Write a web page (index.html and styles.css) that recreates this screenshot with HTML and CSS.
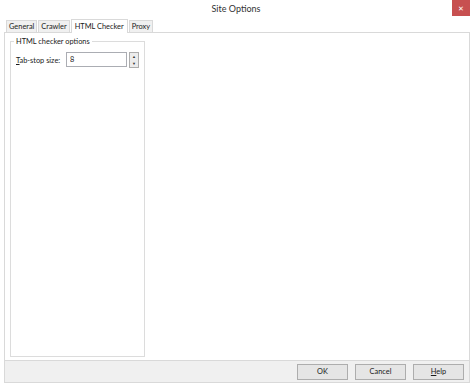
FILE: index.html
```html
<!DOCTYPE html>
<html lang="en">
<head>
    <meta charset="UTF-8">
    <title>Site Options</title>
    <link rel="stylesheet" href="styles.css">
</head>
<body>

    <div class="window">
        <div class="titlebar">
            <span></span>
            <div class="title">Site Options</div>
            <div class="close">&#x2715;</div>
        </div>

        <div class="client">
            <div class="tabs">
                <div class="tab">General</div>
                <div class="tab">Crawler</div>
                <div class="tab active">HTML Checker</div>
                <div class="tab">Proxy</div>
            </div>

            <div class="page">
                <fieldset class="group">
                    <legend>HTML checker options</legend>
                    <div class="row">
                        <label for="tabSize"><u>T</u>ab-stop size:</label>
                        <div class="spin">
                            <input type="text" id="tabSize" value="8">
                            <div class="arrows">
                                <div class="arrow">&#9650;</div>
                                <div class="arrow">&#9660;</div>
                            </div>
                        </div>
                    </div>
                </fieldset>
            </div>

            <div class="buttons">
                <button>OK</button>
                <button>Cancel</button>
                <button><u>H</u>elp</button>
            </div>
        </div>
    </div>

</body>
</html>
```

FILE: styles.css
```css
body {
    margin: 0;
    padding: 0;
    background-color: #fff;
    font-family: Lato, "Open Sans", sans-serif;
    font-size: 7.4px;
    color: #1a1a1a;
}

.window {
    width: 474px;
    height: 388px;
    display: flex;
    flex-direction: column;
    background-color: #fff;
}

.titlebar {
    height: 19px;
    display: grid;
    grid-template-columns: 20px 1fr 22px;
    align-items: start;
}

.title {
    text-align: center;
    font-size: 9px;
    line-height: 18px;
    color: #333;
}

.close {
    width: 18px;
    height: 16px;
    background-color: #c75050;
    color: #fff;
    font-size: 7px;
    line-height: 16px;
    text-align: center;
}

.client {
    flex: 1;
    display: flex;
    flex-direction: column;
    padding: 0 4px 5px 4px;
}

.tabs {
    display: flex;
    align-items: flex-end;
    padding-left: 2px;
    height: 13px;
}

.tab {
    height: 11px;
    line-height: 11px;
    padding: 0 2px;
    border: 1px solid #d9d9d9;
    border-bottom: none;
    background-color: #f0f0f0;
    margin-right: 1px;
    white-space: nowrap;
}

.tab.active {
    height: 13px;
    line-height: 13px;
    background-color: #fff;
    position: relative;
    z-index: 1;
    margin-bottom: -1px;
    padding: 0 3px;
}

.page {
    flex: 1;
    border: 1px solid #d9d9d9;
    border-bottom: none;
    background-color: #fff;
    padding: 4px 0 3px 5px;
    display: flex;
}

.group {
    width: 121px;
    margin: 0;
    padding: 4px 5px;
    border: 1px solid #dcdcdc;
}

.group legend {
    padding: 0 2px;
    margin-left: -2px;
}

.row {
    display: flex;
    align-items: center;
    margin-top: 2px;
}

.row label {
    width: 50px;
    white-space: nowrap;
}

.spin {
    display: flex;
    align-items: stretch;
    gap: 2px;
}

.spin input {
    width: 53px;
    height: 13px;
    padding: 0 3px;
    border: 1px solid #abadb3;
    font-family: inherit;
    font-size: 7.4px;
    color: #1a1a1a;
}

.arrows {
    display: flex;
    flex-direction: column;
    width: 8px;
    border: 1px solid #acacac;
    background-color: #ececec;
}

.arrow {
    flex: 1;
    font-size: 4px;
    line-height: 7px;
    text-align: center;
    color: #333;
}

.buttons {
    height: 21px;
    display: flex;
    justify-content: flex-end;
    align-items: center;
    gap: 7px;
    padding-right: 5px;
    background-color: #f0f0f0;
    border: 1px solid #d9d9d9;
}

button {
    width: 51px;
    height: 16px;
    padding: 0;
    border: 1px solid #adadad;
    background-color: #e5e5e5;
    font-family: inherit;
    font-size: 7.4px;
    color: #1a1a1a;
}
```
